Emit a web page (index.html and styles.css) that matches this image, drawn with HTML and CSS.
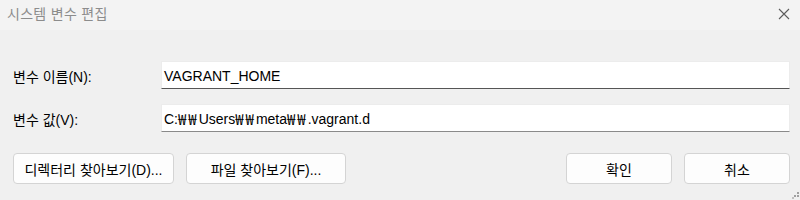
FILE: index.html
```html
<!DOCTYPE html>
<html lang="ko">
<head>
<meta charset="utf-8">
<title>시스템 변수 편집</title>
<link rel="stylesheet" href="styles.css">
</head>
<body>
<div class="window">
  <div class="titlebar">
    <span class="title">시스템 변수 편집</span>
    <span class="close" aria-label="닫기">
      <svg width="12" height="12" viewBox="0 0 12 12"><path d="M1 1 L11 11 M11 1 L1 11" stroke="#5c5c5c" stroke-width="1.1" fill="none"/></svg>
    </span>
  </div>
  <div class="content">
    <div class="field">
      <label class="label">변수 이름(N):</label>
      <div class="textbox textbox-focus">VAGRANT_HOME</div>
    </div>
    <div class="field">
      <label class="label">변수 값(V):</label>
      <div class="textbox">C:<span class="won">₩₩</span>Users<span class="won">₩₩</span>meta<span class="won">₩₩</span>.vagrant.d</div>
    </div>
    <div class="actions">
      <div class="group">
        <button class="btn btn-dir">디렉터리 찾아보기(D)...</button>
        <button class="btn btn-file">파일 찾아보기(F)...</button>
      </div>
      <div class="group">
        <button class="btn btn-small">확인</button>
        <button class="btn btn-small">취소</button>
      </div>
    </div>
  </div>
  <div class="grip">
    <svg width="7" height="7" viewBox="0 0 7 7"><rect x="5" y="0" width="2" height="2" fill="#a0a0a0"/><rect x="2" y="3" width="2" height="2" fill="#a0a0a0"/><rect x="5" y="3" width="2" height="2" fill="#a0a0a0"/><rect x="0" y="5" width="2" height="2" fill="#c0c0c0"/></svg>
  </div>
</div>
</body>
</html>
```
FILE: styles.css
```css
* { box-sizing: border-box; }
html, body { margin: 0; padding: 0; }
body {
  width: 800px;
  height: 200px;
  overflow: hidden;
  background: #f0f0f0;
  font-family: "Liberation Sans", "Noto Sans CJK KR", sans-serif;
  font-size: 14px;
  color: #000;
}
.window {
  position: relative;
  width: 800px;
  height: 200px;
  background: #f0f0f0;
}
.titlebar {
  height: 30px;
  background: #f3f3f3;
  display: flex;
  align-items: center;
  justify-content: space-between;
  padding: 0 10px 4px 7px;
}
.title {
  color: #8c8c8c;
  font-family: "Noto Sans CJK KR", sans-serif;
  font-size: 14px;
  letter-spacing: 0.3px;
}
.close {
  display: flex;
  width: 12px;
  height: 12px;
  margin-top: 2px;
}
.content {
  padding: 31px 10px 0 13px;
}
.field {
  display: flex;
  align-items: center;
  height: 28px;
  margin-bottom: 15px;
}
.field + .field { margin-bottom: 0; }
.label {
  width: 148px;
  flex: none;
  font-size: 14px;
  padding-top: 1px;
}
.textbox {
  flex: 1;
  height: 28px;
  display: flex;
  align-items: center;
  white-space: pre;
  border: 1px solid #ececec;
  border-bottom: 1px solid #8a8a8a;
  background: #fff;
  padding: 1px 2px 0 2px;
  font-size: 14px;
  color: #000;
}
.textbox-focus {
  border-bottom-color: #555;
}
.won {
  font-family: "Noto Sans CJK KR", sans-serif;
  font-size: 15px;
  letter-spacing: 2px;
}
.actions {
  margin-top: 21px;
  display: flex;
  justify-content: space-between;
}
.group {
  display: flex;
  gap: 12px;
}
.btn {
  height: 31px;
  margin: 0;
  padding: 0;
  background: #fdfdfd;
  border: 1px solid #d4d4d4;
  border-radius: 4px;
  font-family: "Liberation Sans", "Noto Sans CJK KR", sans-serif;
  font-size: 14px;
  color: #000;
  text-align: center;
}
.btn-dir { width: 161px; }
.btn-file { width: 160px; }
.btn-small { width: 106px; }
.grip {
  position: absolute;
  right: 1px;
  bottom: 1px;
  width: 7px;
  height: 7px;
  display: flex;
}
```
